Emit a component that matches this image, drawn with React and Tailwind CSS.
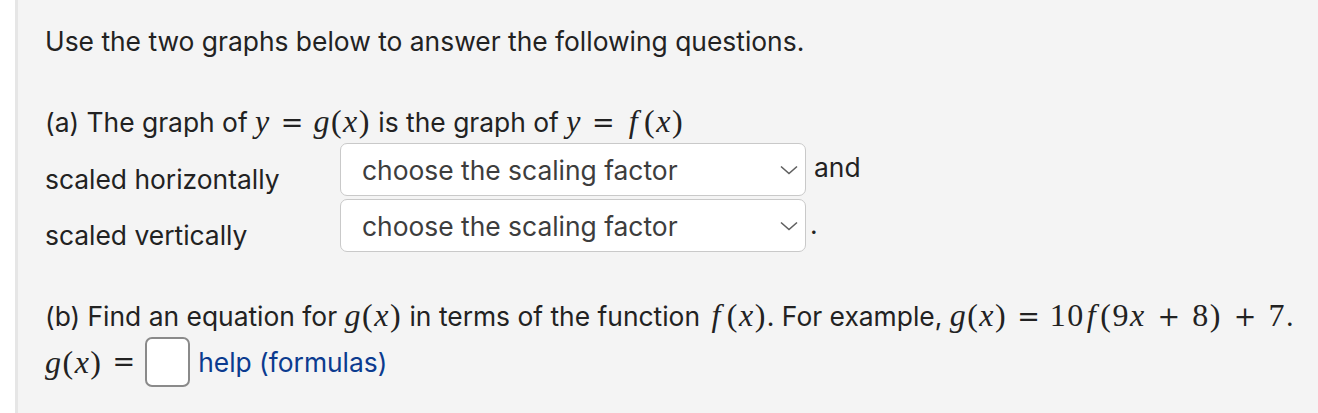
const V = ({ children, className = "" }) => (
  <span className={`italic font-['Liberation_Serif',serif] text-[32px] tracking-[1.5px] ${className}`}>{children}</span>
);
const R = ({ children, className = "" }) => (
  <span className={`font-['Liberation_Serif',serif] text-[32px] tracking-[1.5px] ${className}`}>{children}</span>
);
const Op = ({ children, className = "" }) => (
  <span className={`font-['DejaVu_Serif',serif] text-[27px] font-light ${className}`}>{children}</span>
);
const Eq = () => <Op className="mx-[10px]">=</Op>;

const Fn = ({ name, arg }) => (
  <span className="whitespace-nowrap">
    <V className={name === "f" ? "ml-[4px] mr-[5px]" : ""}>{name}</V>
    <R>(</R>
    <V>{arg}</V>
    <R>)</R>
  </span>
);

const ScaleSelect = () => (
  <div className="w-[466px] h-[53px] bg-white border border-[#c9c9c9] rounded-[7px] flex items-center justify-between pl-[21px] pr-[7px] text-[#3d3d3d]">
    <span>choose the scaling factor</span>
    <svg width="18" height="10" viewBox="0 0 18 10" fill="none" className="mt-[1px]">
      <polyline points="1,1.5 9,8.5 17,1.5" stroke="#5f5f5f" strokeWidth="1.6" />
    </svg>
  </div>
);

export default function App() {
  return (
    <div className="bg-white min-h-[413px] pl-[15px] font-['Inter',sans-serif] text-[26.4px] leading-[32px] text-[#222]">
      <div className="min-h-[413px] bg-[#f4f4f4] border-l-[3px] border-[#e6e6e6] pl-[27px] pt-[25px]">
        <p>Use the two graphs below to answer the following questions.</p>

        <p className="mt-[48px]">
          (a) The graph of <V>y</V>
          <Eq />
          <Fn name="g" arg="x" /> is the graph of <V>y</V>
          <Eq />
          <Fn name="f" arg="x" />
        </p>

        <div className="mt-[4px] flex items-start">
          <span className="w-[295px] mt-[20px]">scaled horizontally</span>
          <ScaleSelect />
          <span className="ml-[8px] mt-[8px]">and</span>
        </div>
        <div className="mt-[3px] flex items-start">
          <span className="w-[295px] mt-[20px]">scaled vertically</span>
          <ScaleSelect />
          <span className="ml-[4px] mt-[9px]">.</span>
        </div>

        <p className="mt-[47px]">
          (b) Find an equation for <Fn name="g" arg="x" /> in terms of the function{" "}
          <Fn name="f" arg="x" />. For example, <Fn name="g" arg="x" />
          <Eq />
          <R>10</R>
          <V className="ml-[2px] mr-[3px]">f</V>
          <R>(9</R>
          <V>x</V>
          <Op className="mx-[12px]">+</Op>
          <R>8)</R>
          <Op className="mx-[12px]">+</Op>
          <R>7</R>.
        </p>

        <div className="mt-[4px] flex items-center">
          <Fn name="g" arg="x" />
          <Eq />
          <div className="w-[45px] h-[50px] bg-white border-2 border-[#8a8a8a] rounded-[7px]" />
          <span className="ml-[8px] text-[#0b3b8f]">help (formulas)</span>
        </div>
      </div>
    </div>
  );
}
